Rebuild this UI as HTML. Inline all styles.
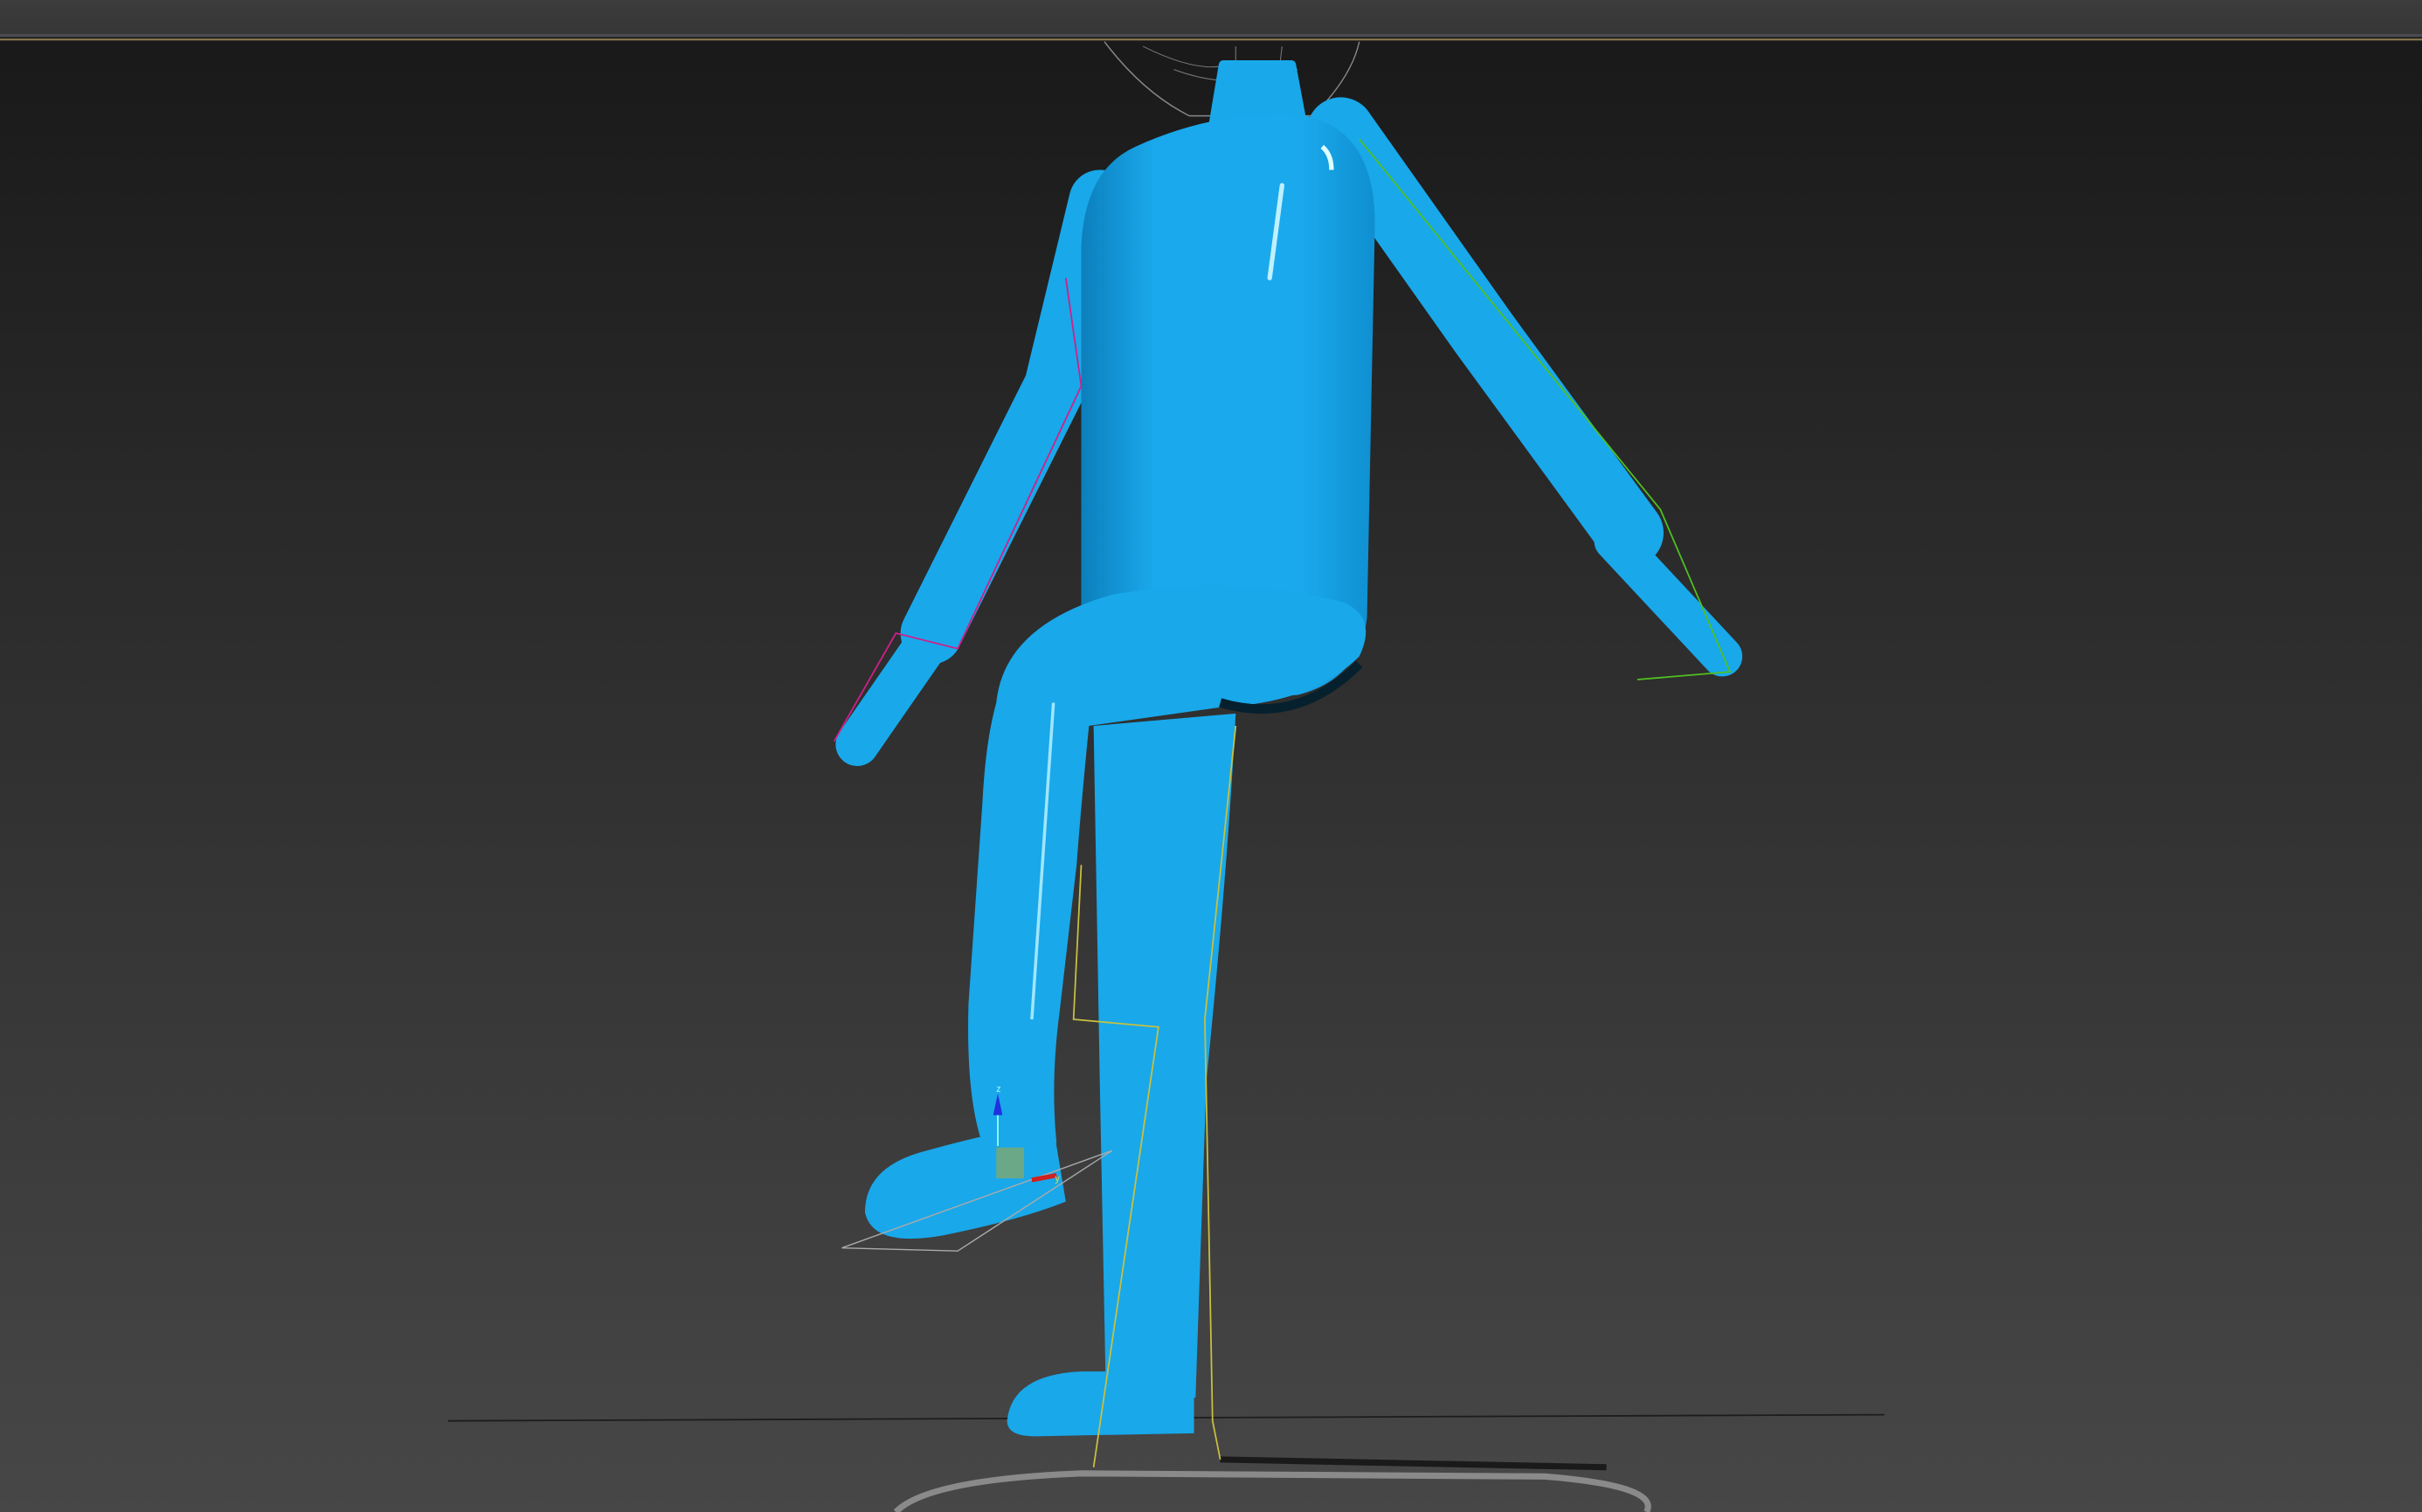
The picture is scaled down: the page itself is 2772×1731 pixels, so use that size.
<!DOCTYPE html>
<html><head><meta charset="utf-8"><style>
html,body{margin:0;padding:0;background:#1e1e1e;overflow:hidden}
svg{display:block}
</style></head><body>
<svg width="2772" height="1731" viewBox="0 0 1568 979" preserveAspectRatio="none" xmlns="http://www.w3.org/2000/svg">
<defs>
<linearGradient id="bg" x1="0" y1="0" x2="0" y2="1">
<stop offset="0" stop-color="#181818"/><stop offset="0.35" stop-color="#2a2a2a"/><stop offset="1" stop-color="#474747"/>
</linearGradient>
<linearGradient id="tb" x1="0" y1="0" x2="0" y2="1">
<stop offset="0" stop-color="#3c3c3c"/><stop offset="1" stop-color="#363636"/>
</linearGradient>
<linearGradient id="body" x1="0" y1="0" x2="1" y2="0">
<stop offset="0" stop-color="#0c7fbc"/><stop offset="0.25" stop-color="#1aa9ec"/><stop offset="0.75" stop-color="#1aa9ec"/><stop offset="1" stop-color="#0f8fd0"/>
</linearGradient>
</defs>
<rect width="1568" height="979" fill="url(#bg)"/>
<rect width="1568" height="24" fill="url(#tb)"/>
<rect y="22" width="1568" height="2" fill="#4a4a50"/>
<rect y="25" width="1568" height="1.2" fill="#8a7a50"/>
<!-- floor -->
<line x1="290" y1="920" x2="1220" y2="916" stroke="#1c1c1c" stroke-width="1"/>
<path d="M580 979 Q600 958 700 954 L1000 956 Q1075 962 1066 979" fill="none" stroke="#8a8a8a" stroke-width="4"/>
<path d="M790 945 L1040 950" stroke="#1a1a1a" stroke-width="4"/>
<!-- head wire -->
<path d="M715 27 Q740 60 770 75 L850 75 Q875 50 880 27" fill="none" stroke="#888" stroke-width="0.8"/>
<path d="M740 30 Q780 50 800 40 M760 45 Q800 60 840 45 M800 30 L800 70 M830 30 L825 72" fill="none" stroke="#777" stroke-width="0.6"/>
<g fill="#19a8ea" stroke="#19a8ea" stroke-linecap="round" stroke-linejoin="round">
<!-- arms -->
<path d="M868 85 L960 215 L1055 345" fill="none" stroke-width="44"/>
<path d="M1045 350 L1115 425" fill="none" stroke-width="26"/>
<path d="M712 130 L683 250 L603 410" fill="none" stroke-width="40"/>
<path d="M598 420 L555 482" fill="none" stroke-width="28"/>
<!-- neck -->
<path d="M792 42 L836 42 L845 90 L784 90 Z" stroke-width="6"/>
<!-- torso -->
<path d="M735 95 Q790 70 845 75 Q892 85 890 150 L885 400 Q880 440 840 450 L760 455 Q700 440 700 400 L700 160 Q702 110 735 95 Z" fill="url(#body)" stroke="none"/>
<!-- standing leg -->
<path d="M708 470 L800 462 Q795 560 781 700 L774 905 L716 905 L712 700 Z" stroke="none"/>
<path d="M652 920 Q655 890 700 888 L773 888 L773 928 L670 930 Q652 930 652 920 Z" stroke="none"/>
<!-- raised leg -->
<path d="M645 455 Q650 405 720 385 Q800 372 870 390 Q892 400 880 425 Q850 455 790 458 L705 470 Q700 520 697 560 L686 655 Q680 700 684 740 L640 750 Q625 720 627 650 L636 520 Q638 480 645 455 Z" stroke="none"/>
<path d="M560 785 Q560 755 600 745 Q625 738 640 735 L682 730 L690 778 Q660 790 610 800 Q565 808 560 785 Z" stroke="none"/>
</g>
<!-- highlights -->
<path d="M822 180 Q826 150 830 120" stroke="#bff0ff" stroke-width="3" fill="none" stroke-linecap="round"/>
<path d="M682 455 L668 660" stroke="#9fe6ff" stroke-width="2" fill="none"/>
<path d="M856 95 Q862 100 862 110" stroke="#dff" stroke-width="3" fill="none"/>
<!-- shadow under thigh -->
<path d="M790 455 Q840 470 880 430" stroke="#06202e" stroke-width="6" fill="none"/>
<!-- rig lines -->
<path d="M800 470 L780 660 L785 920 L790 945" stroke="#c8c040" stroke-width="1" fill="none"/>
<path d="M700 560 L695 660 L750 665 L708 950" stroke="#c8c040" stroke-width="1" fill="none"/>
<path d="M540 480 L580 410 L620 420 L700 250 L690 180" stroke="#d0208a" stroke-width="1" fill="none"/>
<path d="M880 90 L1075 330 L1120 435 L1060 440" stroke="#50c020" stroke-width="1" fill="none"/>
<path d="M545 808 L720 745 L620 810 Z" stroke="#aaa" stroke-width="0.8" fill="none"/>
<rect x="645" y="743" width="18" height="20" fill="#6aa888"/>
<path d="M646 742 L646 710" stroke="#9ff" stroke-width="1"/>
<path d="M643 722 L646 708 L649 722 Z" fill="#2030e0"/>
<path d="M668 764 L684 761" stroke="#d02020" stroke-width="3"/>
<text x="645" y="707" font-family="Liberation Sans, sans-serif" font-size="6" fill="#9ff">z</text>
<text x="683" y="765" font-family="Liberation Sans, sans-serif" font-size="6" fill="#dd4">y</text>
</svg>
</body></html>
